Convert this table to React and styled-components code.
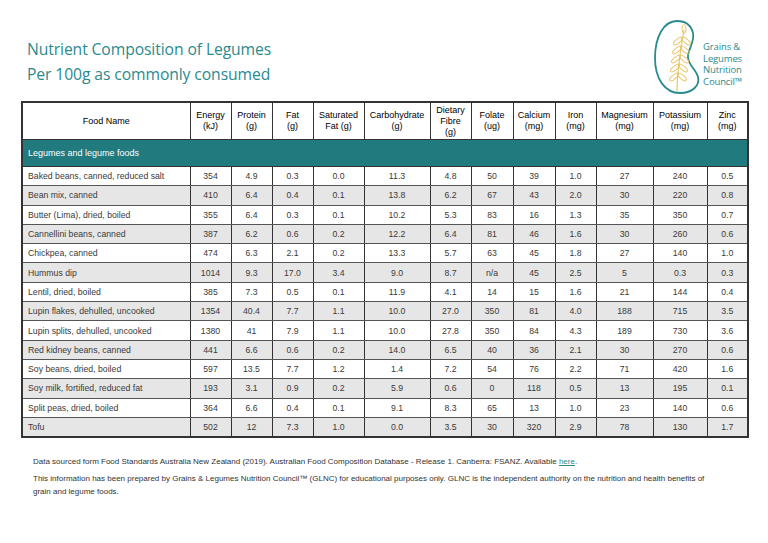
import React from "react";
import styled, { createGlobalStyle } from "styled-components";

const GlobalStyle = createGlobalStyle`
  html, body { margin: 0; padding: 0; background: #fff; }
  body { font-family: "Liberation Sans", Arial, sans-serif; }
`;

const Page = styled.div`
  width: 768px;
  height: 543px;
  overflow: hidden;
  background: #fff;
`;

const Header = styled.div`
  display: flex;
  justify-content: space-between;
  height: 101px;
`;

const Titles = styled.div`
  padding: 37px 0 0 27px;
`;

const Title = styled.div`
  font-family: "Open Sans", sans-serif;
  font-size: 15.7px;
  line-height: 25px;
  color: #2b8a8e;
  letter-spacing: -0.1px;
`;

const Logo = styled.div`
  display: flex;
  align-items: flex-start;
  gap: 2px;
  padding: 18px 26px 0 0;
`;

const LogoText = styled.div`
  font-family: "Open Sans", sans-serif;
  font-size: 9.5px;
  line-height: 11.6px;
  color: #2b8a8e;
  padding-top: 23px;
  letter-spacing: -0.15px;
`;

const Table = styled.table`
  margin-left: 21px;
  width: 726px;
  table-layout: fixed;
  border-collapse: collapse;
  border: 2px solid #333;
  font-size: 8.7px;
  color: #3a3a3a;
`;

const Th = styled.th`
  height: 36px;
  border: 1px solid #333;
  font-weight: 400;
  color: #000;
  font-size: 9px;
  line-height: 11px;
  text-align: center;
  vertical-align: middle;
  padding: 0 1px;
`;

const Section = styled.td`
  height: 26px;
  background: #217a7e;
  color: #fff;
  font-size: 9px;
  padding: 0 0 0 5px;
  border: 1px solid #333;
`;

const Row = styled.tr`
  background: ${p => (p.$shade ? "#e6e6e6" : "#fff")};
`;

const Cell = styled.td`
  height: 18.3px;
  border-left: 1.5px solid #333;
  border-right: 1.5px solid #333;
  border-top: 1px solid #555;
  border-bottom: 1px solid #555;
  text-align: ${p => (p.$name ? "left" : "center")};
  padding: ${p => (p.$name ? "0 0 0 5px" : "0")};
  white-space: nowrap;
`;

const Notes = styled.div`
  padding: 17px 0 0 33px;
  width: 680px;
  font-size: 8px;
  line-height: 13px;
  color: #333;
`;

const Note = styled.p`
  margin: 0 0 4px;
`;

const Link = styled.span`
  color: #2b8a8e;
  text-decoration: underline;
`;

const widths = [168, 41, 41, 41, 51, 66, 41, 42, 42, 41, 57, 54, 41];

const headers = [
  "Food Name",
  ["Energy", "(kJ)"],
  ["Protein", "(g)"],
  ["Fat", "(g)"],
  ["Saturated", "Fat (g)"],
  ["Carbohydrate", "(g)"],
  ["Dietary", "Fibre", "(g)"],
  ["Folate", "(ug)"],
  ["Calcium", "(mg)"],
  ["Iron", "(mg)"],
  ["Magnesium", "(mg)"],
  ["Potassium", "(mg)"],
  ["Zinc", "(mg)"],
];

const rows = [
  ["Baked beans, canned, reduced salt", "354", "4.9", "0.3", "0.0", "11.3", "4.8", "50", "39", "1.0", "27", "240", "0.5"],
  ["Bean mix, canned", "410", "6.4", "0.4", "0.1", "13.8", "6.2", "67", "43", "2.0", "30", "220", "0.8"],
  ["Butter (Lima), dried, boiled", "355", "6.4", "0.3", "0.1", "10.2", "5.3", "83", "16", "1.3", "35", "350", "0.7"],
  ["Cannellini beans, canned", "387", "6.2", "0.6", "0.2", "12.2", "6.4", "81", "46", "1.6", "30", "260", "0.6"],
  ["Chickpea, canned", "474", "6.3", "2.1", "0.2", "13.3", "5.7", "63", "45", "1.8", "27", "140", "1.0"],
  ["Hummus dip", "1014", "9.3", "17.0", "3.4", "9.0", "8.7", "n/a", "45", "2.5", "5", "0.3", "0.3"],
  ["Lentil, dried, boiled", "385", "7.3", "0.5", "0.1", "11.9", "4.1", "14", "15", "1.6", "21", "144", "0.4"],
  ["Lupin flakes, dehulled, uncooked", "1354", "40.4", "7.7", "1.1", "10.0", "27.0", "350", "81", "4.0", "188", "715", "3.5"],
  ["Lupin splits, dehulled, uncooked", "1380", "41", "7.9", "1.1", "10.0", "27.8", "350", "84", "4.3", "189", "730", "3.6"],
  ["Red kidney beans, canned", "441", "6.6", "0.6", "0.2", "14.0", "6.5", "40", "36", "2.1", "30", "270", "0.6"],
  ["Soy beans, dried, boiled", "597", "13.5", "7.7", "1.2", "1.4", "7.2", "54", "76", "2.2", "71", "420", "1.6"],
  ["Soy milk, fortified, reduced fat", "193", "3.1", "0.9", "0.2", "5.9", "0.6", "0", "118", "0.5", "13", "195", "0.1"],
  ["Split peas, dried, boiled", "364", "6.6", "0.4", "0.1", "9.1", "8.3", "65", "13", "1.0", "23", "140", "0.6"],
  ["Tofu", "502", "12", "7.3", "1.0", "0.0", "3.5", "30", "320", "2.9", "78", "130", "1.7"],
];

const leaves = [
  [25, 62, -40], [25, 62, 40],
  [26, 53, -40], [26, 53, 40],
  [27, 44, -40], [27, 44, 40],
  [28, 35, -40], [28, 35, 40],
  [29, 26, -40], [29, 26, 40],
];

const BeanLogo = () => (
  <svg width="48" height="78" viewBox="0 0 48 78">
    <path
      d="M24 3 C10 3 2 20 2 40 C2 61 12 75 27 75 C40 75 47 67 45 59 C43 51 36 48 35 40 C34 32 42 25 40 15 C38 7 32 3 24 3 Z"
      fill="none"
      stroke="#2b8a8e"
      strokeWidth="1.8"
    />
    <path d="M24 73 C24 55 27 35 31 12" fill="none" stroke="#e9c66a" strokeWidth="1.2" />
    {leaves.map(([x, y, r], i) => (
      <ellipse
        key={i}
        cx={x + (r < 0 ? -4 : 4)}
        cy={y - 3}
        rx="5.5"
        ry="2"
        transform={`rotate(${r} ${x + (r < 0 ? -4 : 4)} ${y - 3})`}
        fill="none"
        stroke="#e9c66a"
        strokeWidth="1"
      />
    ))}
    <ellipse cx="31" cy="11" rx="2" ry="4.5" fill="none" stroke="#e9c66a" strokeWidth="1" />
  </svg>
);

export default function App() {
  return (
    <Page>
      <GlobalStyle />
      <Header>
        <Titles>
          <Title>Nutrient Composition of Legumes</Title>
          <Title>Per 100g as commonly consumed</Title>
        </Titles>
        <Logo>
          <BeanLogo />
          <LogoText>
            Grains &amp;<br />Legumes<br />Nutrition<br />Council™
          </LogoText>
        </Logo>
      </Header>
      <Table>
        <colgroup>
          {widths.map((w, i) => (
            <col key={i} style={{ width: w }} />
          ))}
        </colgroup>
        <thead>
          <tr>
            {headers.map((h, i) => (
              <Th key={i}>
                {Array.isArray(h)
                  ? h.map((l, j) => (
                      <React.Fragment key={j}>
                        {j > 0 && <br />}
                        {l}
                      </React.Fragment>
                    ))
                  : h}
              </Th>
            ))}
          </tr>
        </thead>
        <tbody>
          <tr>
            <Section colSpan={13}>Legumes and legume foods</Section>
          </tr>
          {rows.map((r, i) => (
            <Row key={i} $shade={i % 2 === 1}>
              {r.map((v, j) => (
                <Cell key={j} $name={j === 0}>
                  {v}
                </Cell>
              ))}
            </Row>
          ))}
        </tbody>
      </Table>
      <Notes>
        <Note>
          Data sourced form Food Standards Australia New Zealand (2019). Australian Food Composition Database - Release 1. Canberra: FSANZ. Available <Link>here</Link>.
        </Note>
        <Note>
          This information has been prepared by Grains &amp; Legumes Nutrition Council™ (GLNC) for educational purposes only. GLNC is the independent authority on the nutrition and health benefits of grain and legume foods.
        </Note>
      </Notes>
    </Page>
  );
}
